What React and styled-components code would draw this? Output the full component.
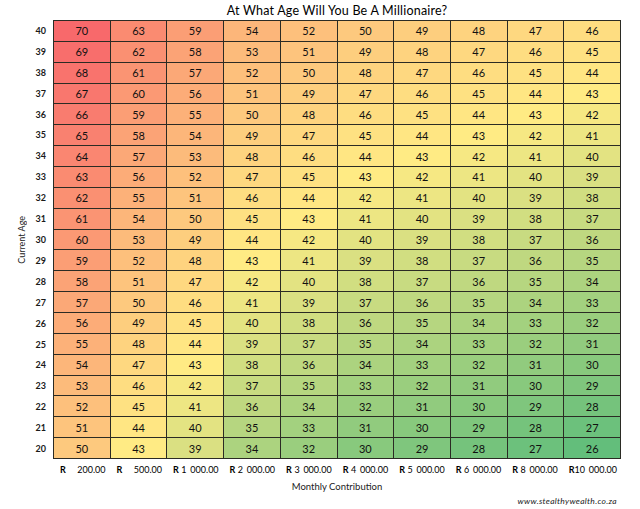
import React from 'react';
import styled, { createGlobalStyle } from 'styled-components';

const GlobalStyle = createGlobalStyle`
  html, body {
    margin: 0;
    padding: 0;
    background: #fff;
  }
`;

const ages = Array.from({ length: 21 }, (_, i) => 40 - i);
const tops = [70, 63, 59, 54, 52, 50, 49, 48, 47, 46];
const amounts = ['200.00', '500.00', '1 000.00', '2 000.00', '3 000.00', '4 000.00', '5 000.00', '6 000.00', '8 000.00', '10 000.00'];

/* Excel style 3 colour scale: green (min) -> yellow (median) -> red (max) */
const MIN = 26;
const MID = 43;
const MAX = 70;
const GREEN = [99, 190, 123];
const YELLOW = [255, 235, 132];
const RED = [248, 105, 107];

function mix(a, b, t) {
  return a.map((v, i) => Math.round(v + (b[i] - v) * t));
}

function scale(v) {
  const c = v <= MID ? mix(GREEN, YELLOW, (v - MIN) / (MID - MIN)) : mix(YELLOW, RED, (v - MID) / (MAX - MID));
  return `rgb(${c.join(',')})`;
}

/* Page */
const Page = styled.div`
  width: 640px;
  height: 509px;
  background: #fff;
  font-family: 'Lato', 'Liberation Sans', sans-serif;
  color: #111;
  display: flex;
  flex-direction: column;
`;

const Title = styled.h1`
  margin: 0 0 0 53px;
  width: 568px;
  height: 20px;
  font-family: 'Lato', 'DejaVu Sans', sans-serif;
  font-size: 12.5px;
  font-weight: 400;
  line-height: 22px;
  text-align: center;
  color: #000;
  letter-spacing: 0.2px;
`;

const Body = styled.div`
  display: flex;
  height: 439px;
`;

/* Y axis title */
const AxisTitle = styled.div`
  width: 30px;
  display: flex;
  align-items: center;
  justify-content: flex-end;
  padding-right: 3px;
  box-sizing: border-box;
  font-size: 9px;
  color: #222;

  span {
    writing-mode: vertical-rl;
    transform: rotate(180deg);
  }
`;

const RowLabels = styled.div`
  width: 23px;
  display: grid;
  grid-template-rows: repeat(21, 1fr);
`;

const RowLabel = styled.div`
  display: flex;
  align-items: center;
  justify-content: flex-end;
  padding-right: 7px;
  font-size: 9px;
  font-weight: 700;
  color: #1a1a1a;
`;

/* Heat map table */
const Table = styled.div`
  width: 568px;
  display: grid;
  grid-template-columns: repeat(10, 1fr);
  grid-template-rows: repeat(21, 1fr);
  gap: 1px;
  padding: 1px;
  box-sizing: border-box;
  background: #2b2b24;
`;

const Cell = styled.div`
  display: flex;
  align-items: center;
  justify-content: center;
  background: ${(p) => p.$bg};
  font-size: 11px;
  color: #111;
`;

/* X axis */
const XLabels = styled.div`
  margin-left: 53px;
  width: 568px;
  height: 21px;
  display: grid;
  grid-template-columns: repeat(10, 1fr);
`;

const XLabel = styled.div`
  display: flex;
  align-items: center;
  justify-content: space-between;
  padding: 0 4px 0 7px;
  font-size: 9px;
  font-weight: 400;
  color: #000;
  white-space: nowrap;
  word-spacing: 1.5px;

  span:first-child {
    font-weight: 700;
  }
`;

const AxisCaption = styled.div`
  margin-left: 53px;
  width: 568px;
  height: 14px;
  text-align: center;
  font-size: 9.5px;
  line-height: 14px;
  color: #222;
`;

const Credit = styled.div`
  width: 617px;
  height: 14px;
  text-align: right;
  font-size: 8.5px;
  font-style: italic;
  line-height: 14px;
  color: #222;
  letter-spacing: 0.3px;
`;

export default function App() {
  return (
    <>
      <GlobalStyle />
      <Page>
        <Title>At What Age Will You Be A Millionaire?</Title>
        <Body>
          <AxisTitle>
            <span>Current Age</span>
          </AxisTitle>
          <RowLabels>
            {ages.map((a) => (
              <RowLabel key={a}>{a}</RowLabel>
            ))}
          </RowLabels>
          <Table>
            {ages.map((a) =>
              tops.map((t, c) => {
                const v = t - (40 - a);
                return (
                  <Cell key={`${a}-${c}`} $bg={scale(v)}>
                    {v}
                  </Cell>
                );
              })
            )}
          </Table>
        </Body>
        <XLabels>
          {amounts.map((m) => (
            <XLabel key={m}>
              <span>R</span>
              <span>{m}</span>
            </XLabel>
          ))}
        </XLabels>
        <AxisCaption>Monthly Contribution</AxisCaption>
        <Credit>www.stealthywealth.co.za</Credit>
      </Page>
    </>
  );
}
